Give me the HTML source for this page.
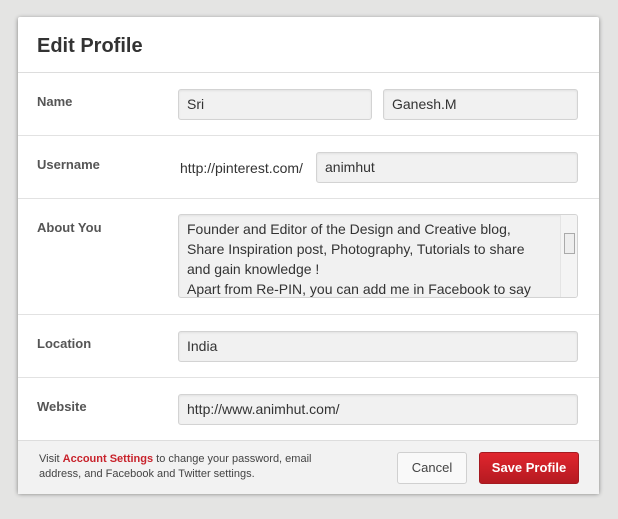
<!DOCTYPE html>
<html><head><style>
body{margin:0;width:618px;height:519px;background:#e4e4e3;font-family:"Liberation Sans",sans-serif;position:relative;overflow:hidden}
.m{position:absolute;left:18px;top:17px;width:581px;height:476px;background:#fff;box-shadow:0 1px 4px rgba(0,0,0,.45);border-radius:2px}
.h{position:absolute;left:0;top:0;width:581px;height:55px;border-bottom:1px solid #ddd}
.h div{position:absolute;left:19px;top:18px;font-size:20px;font-weight:bold;color:#333}
.sep{position:absolute;left:0;width:581px;border-top:1px solid #e2e2e2}
.l{position:absolute;left:19px;font-size:13px;font-weight:bold;color:#555}
.i{position:absolute;box-sizing:border-box;background:#f1f1f1;border:1px solid #d3d3d3;border-radius:3px;font-size:14px;color:#333;padding-left:8px;line-height:29px;box-shadow:inset 0 1px 2px rgba(0,0,0,.07)}
.f{position:absolute;left:0;top:423px;width:581px;height:53px;background:#f2f2f2;border-top:1px solid #ddd}
.b{position:absolute;box-sizing:border-box;border-radius:3px;font-size:13px;text-align:center;line-height:30px}
</style></head><body>
<div class="m">
<div class="h"><div>Edit Profile</div></div>
<div class="l" style="top:77px">Name</div>
<div class="i" style="left:160px;top:72px;width:194px;height:31px">Sri</div>
<div class="i" style="left:365px;top:72px;width:195px;height:31px">Ganesh.M</div>
<div class="sep" style="top:118px"></div>
<div class="l" style="top:140px">Username</div>
<div style="position:absolute;left:162px;top:143px;font-size:14px;color:#333">http://pinterest.com/</div>
<div class="i" style="left:298px;top:135px;width:262px;height:31px">animhut</div>
<div class="sep" style="top:181px"></div>
<div class="l" style="top:203px">About You</div>
<div class="i" style="left:160px;top:197px;width:400px;height:84px;line-height:20px;padding-top:4px;overflow:hidden;padding-right:34px">Founder and Editor of the Design and Creative blog, Share Inspiration post, Photography, Tutorials to share and gain knowledge !<br>Apart from Re-PIN, you can add me in Facebook to say
<div style="position:absolute;right:0;top:0;width:16px;height:82px;background:#f4f4f4;border-left:1px solid #e4e4e4"><div style="position:absolute;left:3px;top:18px;width:9px;height:19px;border:1px solid #aaa;background:#eee"></div></div></div>
<div class="sep" style="top:297px"></div>
<div class="l" style="top:319px">Location</div>
<div class="i" style="left:160px;top:314px;width:400px;height:31px">India</div>
<div class="sep" style="top:360px"></div>
<div class="l" style="top:382px">Website</div>
<div class="i" style="left:160px;top:377px;width:400px;height:31px">http://www.animhut.com/</div>
<div class="f">
<div style="position:absolute;left:21px;top:11px;font-size:11px;line-height:15px;color:#444">Visit <b style="color:#c8222b">Account Settings</b> to change your password, email<br>address, and Facebook and Twitter settings.</div>
<div class="b" style="left:379px;top:11px;width:70px;height:32px;border:1px solid #d0d0d0;background:#f9f9f9;color:#444">Cancel</div>
<div class="b" style="left:461px;top:11px;width:100px;height:32px;background:linear-gradient(#e0262e,#b51a21);border:1px solid #a51a20;color:#fff;font-weight:bold">Save Profile</div>
</div>
</div>
</body></html>
